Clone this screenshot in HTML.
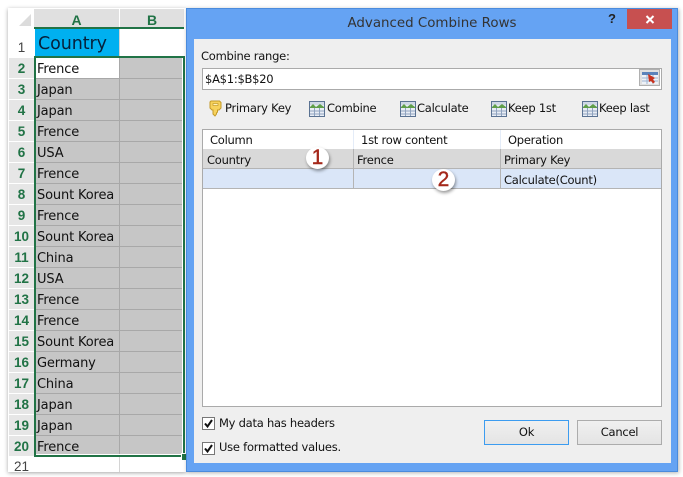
<!DOCTYPE html>
<html><head><meta charset="utf-8">
<style>
html,body{margin:0;padding:0;background:#fff}
body{width:683px;height:477px;position:relative;overflow:hidden;font-family:"DejaVu Sans","Liberation Sans",sans-serif;color:#111}
div,span{position:absolute;white-space:nowrap}
.r{left:9px;width:25px;height:20px;background:#e6e6e6;color:#217346;font:bold 13.5px/21px "Liberation Sans",sans-serif;text-align:center}
.a{left:34px;height:20px;background:#c6c6c6;border-bottom:1px solid #a8a8a8;font:13px/23px "DejaVu Sans",sans-serif;letter-spacing:-.15px;padding-left:3px;width:82px}
.b{left:120px;width:64px;height:20px;background:#c6c6c6;border-bottom:1px solid #a8a8a8}
.t{font-size:11.5px;line-height:16px;color:#111;letter-spacing:-.25px}
</style></head><body>
<div style="left:8px;top:8px;width:178px;height:464px;background:#fff;box-shadow:0 1px 4px rgba(0,0,0,.35)"></div>
<div style="left:9px;top:9px;width:25px;height:20px;background:#fff"></div>
<svg style="position:absolute;left:18px;top:13px" width="14" height="14"><path d="M13 1V13H1Z" fill="#dcdcdc"/></svg>
<div style="left:34px;top:9px;width:85px;height:19px;background:#e0e0e0;color:#217346;font:bold 14px/22px 'Liberation Sans',sans-serif;text-align:center">A</div>
<div style="left:120px;top:9px;width:64px;height:19px;background:#e0e0e0;color:#217346;font:bold 14px/22px 'Liberation Sans',sans-serif;text-align:center">B</div>
<div style="left:34px;top:27px;width:150px;height:2px;background:#217346"></div>
<div style="left:35px;top:29px;width:85px;height:27px;background:#00b0f0;color:#06203a;font:17.5px/30px 'DejaVu Sans',sans-serif;letter-spacing:-.1px;padding-left:3px;box-sizing:border-box">Country</div>
<div style="left:9px;top:29px;width:25px;height:27px;color:#444;font:13.500px/38px 'Liberation Sans',sans-serif;text-align:center">1</div>

<div class="r" style="top:58px">2</div><div class="a" style="top:58px;background:#fff">Frence</div><div class="b" style="top:58px"></div>
<div class="r" style="top:79px">3</div><div class="a" style="top:79px">Japan</div><div class="b" style="top:79px"></div>
<div class="r" style="top:100px">4</div><div class="a" style="top:100px">Japan</div><div class="b" style="top:100px"></div>
<div class="r" style="top:121px">5</div><div class="a" style="top:121px">Frence</div><div class="b" style="top:121px"></div>
<div class="r" style="top:142px">6</div><div class="a" style="top:142px">USA</div><div class="b" style="top:142px"></div>
<div class="r" style="top:163px">7</div><div class="a" style="top:163px">Frence</div><div class="b" style="top:163px"></div>
<div class="r" style="top:184px">8</div><div class="a" style="top:184px">Sount Korea</div><div class="b" style="top:184px"></div>
<div class="r" style="top:205px">9</div><div class="a" style="top:205px">Frence</div><div class="b" style="top:205px"></div>
<div class="r" style="top:226px">10</div><div class="a" style="top:226px">Sount Korea</div><div class="b" style="top:226px"></div>
<div class="r" style="top:247px">11</div><div class="a" style="top:247px">China</div><div class="b" style="top:247px"></div>
<div class="r" style="top:268px">12</div><div class="a" style="top:268px">USA</div><div class="b" style="top:268px"></div>
<div class="r" style="top:289px">13</div><div class="a" style="top:289px">Frence</div><div class="b" style="top:289px"></div>
<div class="r" style="top:310px">14</div><div class="a" style="top:310px">Frence</div><div class="b" style="top:310px"></div>
<div class="r" style="top:331px">15</div><div class="a" style="top:331px">Sount Korea</div><div class="b" style="top:331px"></div>
<div class="r" style="top:352px">16</div><div class="a" style="top:352px">Germany</div><div class="b" style="top:352px"></div>
<div class="r" style="top:373px">17</div><div class="a" style="top:373px">China</div><div class="b" style="top:373px"></div>
<div class="r" style="top:394px">18</div><div class="a" style="top:394px">Japan</div><div class="b" style="top:394px"></div>
<div class="r" style="top:415px">19</div><div class="a" style="top:415px">Japan</div><div class="b" style="top:415px"></div>
<div class="r" style="top:436px">20</div><div class="a" style="top:436px">Frence</div><div class="b" style="top:436px"></div>
<div style="left:9px;top:458px;width:25px;height:14px;color:#444;font:13.500px/18px 'Liberation Sans',sans-serif;text-align:center">21</div>
<div style="left:119px;top:29px;width:1px;height:29px;background:#d4d4d4"></div>
<div style="left:119px;top:457px;width:1px;height:15px;background:#d4d4d4"></div>
<div style="left:119px;top:58px;width:1px;height:399px;background:#a8a8a8"></div>
<div style="left:34px;top:56px;width:151px;height:401px;box-sizing:border-box;border:2px solid #217346"></div>
<div style="left:36px;top:58px;width:147px;height:397px;box-sizing:border-box;border:1px solid #fff;border-top:0;border-left:0"></div>
<div style="left:181px;top:453px;width:6px;height:6px;background:#217346;border:1px solid #fff"></div>

<div style="left:186px;top:8px;width:492px;height:464px;background:#65a3f3;border:1px solid #4a8bdc;box-sizing:border-box;box-shadow:1px 1px 4px rgba(0,0,0,.3)"></div>
<div style="left:186px;top:8px;width:492px;height:32px;font-size:13.4px;line-height:32px;text-align:center;color:#333">Advanced Combine Rows</div>
<div style="left:608px;top:10px;font:bold 13px/18px 'Liberation Sans',sans-serif;color:#222">?</div>
<div style="left:627px;top:9px;width:45px;height:20px;background:#c75050"></div>
<svg style="position:absolute;left:645px;top:15px" width="10" height="9"><path d="M1.500 1L8.500 8M8.500 1L1.500 8" stroke="#fff" stroke-width="2"/></svg>
<div style="left:194px;top:39px;width:477px;height:424px;background:#efefef"></div>

<div class="t" style="left:201px;top:48px">Combine range:</div>
<div style="left:202px;top:68px;width:460px;height:22px;background:#fff;border:1px solid #aaa;box-sizing:border-box"></div>
<div class="t" style="left:205px;top:71px">$A$1:$B$20</div>
<div style="left:639px;top:69px;width:21px;height:17px;background:#e0e0e0;border:1px solid #b0b0b0;box-sizing:border-box"></div>
<svg style="position:absolute;left:642px;top:72px" width="16" height="12"><rect width="16" height="3" fill="#5b83bb"/><rect y="3" width="16" height="9" fill="#eef2f8"/><path d="M0 6H16M0 9H16M5 3V12M11 3V12" stroke="#9db4d2"/><path d="M6 2L13 6L11 7.500L13 10L11 11.500L9 9L7 10Z" fill="#c8321e"/></svg>

<svg style="position:absolute;left:209px;top:100px" width="13" height="18"><path d="M2 1H10.500L12 2.500V8L10 10H8.500V12L7.500 13V14L6 16L4 14V10H3L1 8V2Z" fill="#f7d25c" stroke="#c39a28"/><rect x="4" y="3.500" width="5" height="2" fill="#fff3c0" stroke="#c39a28" stroke-width=".7"/></svg>
<div class="t" style="left:225px;top:100px">Primary Key</div>

<svg style="position:absolute;left:309px;top:101px" width="17" height="17"><rect x=".5" y=".5" width="15" height="15" fill="#e8edf5" stroke="#5a7292"/><rect x="1" y="1" width="14" height="3" fill="#cfd8e6"/><path d="M1 6L4 3L7 6L11 3L15 6V7H1Z" fill="#5f9e4a"/><path d="M1 10H15M1 13H15M5.500 7V15M10.500 7V15" stroke="#8fa3bf"/></svg>
<div class="t" style="left:327px;top:100px">Combine</div>
<svg style="position:absolute;left:400px;top:101px" width="17" height="17"><rect x=".5" y=".5" width="15" height="15" fill="#e8edf5" stroke="#5a7292"/><rect x="1" y="1" width="14" height="3" fill="#cfd8e6"/><path d="M1 6L4 3L7 6L11 3L15 6V7H1Z" fill="#5f9e4a"/><path d="M1 10H15M1 13H15M5.500 7V15M10.500 7V15" stroke="#8fa3bf"/></svg>
<div class="t" style="left:417px;top:100px">Calculate</div>
<svg style="position:absolute;left:491px;top:101px" width="17" height="17"><rect x=".5" y=".5" width="15" height="15" fill="#e8edf5" stroke="#5a7292"/><rect x="1" y="1" width="14" height="3" fill="#cfd8e6"/><path d="M1 6L4 3L7 6L11 3L15 6V7H1Z" fill="#5f9e4a"/><path d="M1 10H15M1 13H15M5.500 7V15M10.500 7V15" stroke="#8fa3bf"/></svg>
<div class="t" style="left:508px;top:100px">Keep 1st</div>
<svg style="position:absolute;left:582px;top:101px" width="17" height="17"><rect x=".5" y=".5" width="15" height="15" fill="#e8edf5" stroke="#5a7292"/><rect x="1" y="1" width="14" height="3" fill="#cfd8e6"/><path d="M1 6L4 3L7 6L11 3L15 6V7H1Z" fill="#5f9e4a"/><path d="M1 10H15M1 13H15M5.500 7V15M10.500 7V15" stroke="#8fa3bf"/></svg>
<div class="t" style="left:599px;top:100px">Keep last</div>

<div style="left:202px;top:129px;width:460px;height:278px;background:#fff;border:1px solid #aaa;box-sizing:border-box"></div>
<div style="left:203px;top:149px;width:458px;height:20px;background:#d9d9d9;border-bottom:1px solid #b4b4b4;box-sizing:border-box"></div>
<div style="left:203px;top:169px;width:458px;height:20px;background:#dae6f8;border-bottom:1px solid #b4b4b4;box-sizing:border-box"></div>
<div style="left:353px;top:130px;width:1px;height:19px;background:#e4ecf8"></div>
<div style="left:500px;top:130px;width:1px;height:19px;background:#e4ecf8"></div>
<div style="left:353px;top:149px;width:1px;height:40px;background:#b4b4b4"></div>
<div style="left:500px;top:149px;width:1px;height:40px;background:#b4b4b4"></div>
<div class="t" style="left:210px;top:132px">Column</div>
<div class="t" style="left:361px;top:132px">1st row content</div>
<div class="t" style="left:508px;top:132px">Operation</div>
<div class="t" style="left:207px;top:152px">Country</div>
<div class="t" style="left:357px;top:152px">Frence</div>
<div class="t" style="left:504px;top:152px">Primary Key</div>
<div class="t" style="left:504px;top:172px">Calculate(Count)</div>

<div style="left:306px;top:147px;width:23px;height:22px;border-radius:50%;background:#fff;box-shadow:1px 2px 3px rgba(0,0,0,.4);color:#a5281b;font:21px/22px 'Liberation Sans',sans-serif;-webkit-text-stroke:.4px #a5281b;text-align:center">1</div>
<div style="left:432px;top:169px;width:23px;height:22px;border-radius:50%;background:#fff;box-shadow:1px 2px 3px rgba(0,0,0,.4);color:#a5281b;font:21px/22px 'Liberation Sans',sans-serif;-webkit-text-stroke:.4px #a5281b;text-align:center">2</div>

<svg style="position:absolute;left:202px;top:417px" width="13" height="13"><rect x=".5" y=".5" width="12" height="12" fill="#fff" stroke="#777"/><path d="M3 6.500L5.500 9.500L10 3" fill="none" stroke="#111" stroke-width="2"/></svg>
<div class="t" style="left:219px;top:415px">My data has headers</div>
<svg style="position:absolute;left:202px;top:442px" width="13" height="13"><rect x=".5" y=".5" width="12" height="12" fill="#fff" stroke="#777"/><path d="M3 6.500L5.500 9.500L10 3" fill="none" stroke="#111" stroke-width="2"/></svg>
<div class="t" style="left:219px;top:439px">Use formatted values.</div>

<div class="t" style="left:484px;top:420px;width:85px;height:25px;box-sizing:border-box;border:1px solid #3c9cf0;background:linear-gradient(#f0f0f0,#e4e4e4);text-align:center;line-height:22px">Ok</div>
<div class="t" style="left:577px;top:420px;width:85px;height:25px;box-sizing:border-box;border:1px solid #acacac;background:linear-gradient(#f0f0f0,#e4e4e4);text-align:center;line-height:22px">Cancel</div>
</body></html>
